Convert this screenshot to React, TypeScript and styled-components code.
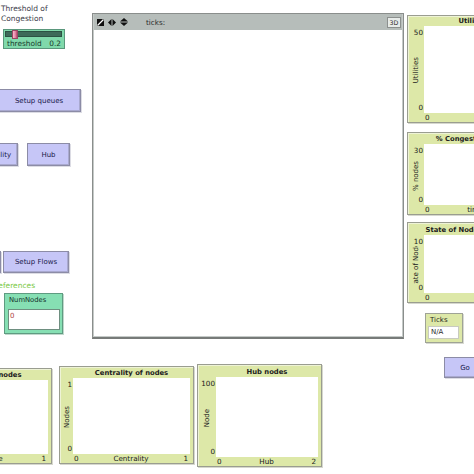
import React from "react";
import styled, { createGlobalStyle, css } from "styled-components";

const GlobalStyle = createGlobalStyle`
  html, body { margin: 0; padding: 0; background: #ffffff; }
  body {
    font-family: "DejaVu Sans", "Liberation Sans", sans-serif;
    overflow: hidden;
  }
`;

type Box = { $x: number; $y: number; $w: number; $h: number };

const placed = css<Box>`
  position: absolute;
  left: ${(p) => p.$x}px;
  top: ${(p) => p.$y}px;
  width: ${(p) => p.$w}px;
  height: ${(p) => p.$h}px;
  box-sizing: border-box;
`;

const Canvas = styled.div`
  position: relative;
  width: 474px;
  height: 474px;
  overflow: hidden;
  background: #ffffff;
`;

/* ---------- text notes ---------- */
const Note = styled.div<Box & { $color: string }>`
  ${placed};
  font-size: 7.5px;
  line-height: 9.5px;
  color: ${(p) => p.$color};
  white-space: nowrap;
`;

/* ---------- slider ---------- */
const Slider = styled.div<Box>`
  ${placed};
  display: flex;
  flex-direction: column;
  gap: 2px;
  padding: 1px 2px 0 1px;
  background: #80d9ab;
  border: 1px solid #5a977c;
`;

const SliderTrack = styled.div`
  position: relative;
  height: 6px;
  background: #3d6a59;
  border: 1px solid #2c5243;
  box-sizing: border-box;
`;

const SliderThumb = styled.div<{ $pos: number }>`
  position: absolute;
  top: -2px;
  left: ${(p) => p.$pos}%;
  width: 6px;
  height: 9px;
  box-sizing: border-box;
  background: linear-gradient(90deg, #f6b8cd 0%, #ea86a8 55%, #b04a6e 100%);
  border: 1px solid #9a4764;
`;

const SliderLabels = styled.div`
  display: flex;
  justify-content: space-between;
  padding: 0 1px 0 2px;
  font-size: 7.4px;
  line-height: 9px;
  color: #183a2c;
`;

/* ---------- buttons ---------- */
const Button = styled.div<Box>`
  ${placed};
  display: flex;
  align-items: center;
  justify-content: center;
  background: #c6c6f7;
  border: 1px solid #8c8ca6;
  box-shadow: inset -1px -1px 0 #a9a9cf, 1px 1px 0 #dcdce4;
  font-size: 7px;
  color: #18184a;
  white-space: nowrap;
`;

/* ---------- input ---------- */
const InputBox = styled.div<Box>`
  ${placed};
  display: flex;
  flex-direction: column;
  gap: 5px;
  padding: 2px 2px 3px 3px;
  background: #86dfb3;
  border: 1px solid #5f9b81;
  box-shadow: 1px 1px 0 #c0d8cc;
`;

const InputLabel = styled.div`
  font-size: 6.8px;
  line-height: 8px;
  color: #14302a;
  padding-left: 1px;
`;

const InputField = styled.div`
  flex: 1;
  background: #ffffff;
  border: 1px solid #6e8f80;
  font-size: 7px;
  line-height: 9px;
  padding: 2px 1px;
  color: #b04545;
`;

/* ---------- monitor ---------- */
const Monitor = styled.div<Box>`
  ${placed};
  display: flex;
  flex-direction: column;
  gap: 2px;
  padding: 2px 3px 3px 2px;
  background: #dde8a8;
  border: 1px solid #9fa396;
  box-shadow: 1px 1px 0 #d8dad2;
`;

const MonitorLabel = styled.div`
  font-size: 7px;
  line-height: 8px;
  color: #2a2a22;
  padding-left: 2px;
`;

const MonitorValue = styled.div`
  flex: 1;
  background: #ffffff;
  border: 1px solid #c8cac0;
  font-size: 7px;
  line-height: 11px;
  padding-left: 2px;
  color: #2a2a2a;
`;

/* ---------- world view ---------- */
const View = styled.div<Box>`
  ${placed};
  display: flex;
  flex-direction: column;
  padding: 0 1px 1px 1px;
  background: #c5cac8;
  border: 1px solid #8a8e8c;
  border-bottom: 2px solid #777b79;
`;

const ViewHeader = styled.div`
  height: 16px;
  flex: none;
  display: flex;
  align-items: center;
  gap: 4px;
  padding: 0 1px 0 3px;
  background: #b6bdba;
  font-size: 7.2px;
  color: #2b2b2b;
`;

const TicksLabel = styled.span`
  margin-left: 14px;
  flex: 1;
`;

const ThreeD = styled.div`
  width: 14px;
  height: 11px;
  box-sizing: border-box;
  display: flex;
  align-items: center;
  justify-content: center;
  background: #e7ebe9;
  border: 1px solid #8c908e;
  font-size: 6.3px;
  color: #2b2b2b;
`;

const ViewBody = styled.div`
  flex: 1;
  background: #ffffff;
`;

/* ---------- plot ---------- */
const PlotFrame = styled.div<Box & { $axis: number; $titleH: number }>`
  ${placed};
  display: grid;
  grid-template-columns: ${(p) => p.$axis}px 1fr;
  grid-template-rows: ${(p) => p.$titleH}px 1fr 9px;
  padding-right: 3px;
  background: #dde8a8;
  border: 1px solid #9a9d90;
  box-shadow: inset 1px 1px 0 #eef3d6, 1px 1px 0 #d6d8ce;
  color: #202020;
`;

const PlotTitle = styled.div`
  grid-column: 2;
  grid-row: 1;
  display: flex;
  justify-content: center;
  align-items: flex-end;
  padding-bottom: 1px;
  font-size: 6.8px;
  line-height: 8px;
  font-weight: bold;
  white-space: nowrap;
`;

const YAxis = styled.div`
  grid-column: 1;
  grid-row: 2;
  display: flex;
  flex-direction: column;
  min-height: 0;
  padding: 3px 1px 1px 0;
  font-size: 7.2px;
  line-height: 8px;
  text-align: right;
`;

const YLabelSlot = styled.div`
  flex: 1;
  min-height: 0;
  overflow: hidden;
  display: flex;
  align-items: center;
  justify-content: center;
  padding-left: 1px;
`;

const YLabel = styled.span`
  writing-mode: vertical-rl;
  transform: rotate(180deg);
  white-space: nowrap;
  font-size: 7px;
  line-height: 8px;
`;

const PlotArea = styled.div`
  grid-column: 2;
  grid-row: 2;
  background: #ffffff;
`;

const XAxis = styled.div`
  grid-column: 2;
  grid-row: 3;
  display: flex;
  justify-content: space-between;
  align-items: center;
  padding: 0 2px 0 1px;
  font-size: 7.2px;
  line-height: 9px;
  white-space: nowrap;
`;

type PlotProps = {
  x: number;
  y: number;
  w: number;
  h: number;
  axis: number;
  titleH?: number;
  title: string;
  yMax: string;
  yMin: string;
  yLabel: string;
  xMin: string;
  xMax: string;
  xLabel: string;
};

const Plot: React.FC<PlotProps> = ({ x, y, w, h, axis, titleH = 11, title, yMax, yMin, yLabel, xMin, xMax, xLabel }) => (
  <PlotFrame $x={x} $y={y} $w={w} $h={h} $axis={axis} $titleH={titleH}>
    <PlotTitle>{title}</PlotTitle>
    <YAxis>
      <div>{yMax}</div>
      <YLabelSlot>
        <YLabel>{yLabel}</YLabel>
      </YLabelSlot>
      <div>{yMin}</div>
    </YAxis>
    <PlotArea />
    <XAxis>
      <span>{xMin}</span>
      <span>{xLabel}</span>
      <span>{xMax}</span>
    </XAxis>
  </PlotFrame>
);

/* ---------- view icons ---------- */
const ShapeIcon = () => (
  <svg width="7" height="7" viewBox="0 0 7 7">
    <rect x="0" y="0" width="7" height="7" fill="#111" />
    <path d="M0.5 6.5 L6.5 0.5" stroke="#fff" strokeWidth="1.2" />
  </svg>
);

const HorizIcon = () => (
  <svg width="8" height="7" viewBox="0 0 8 7">
    <path d="M0 3.5 L3.5 0 L3.5 7 Z" fill="#111" />
    <path d="M8 3.5 L4.5 0 L4.5 7 Z" fill="#111" />
  </svg>
);

const VertIcon = () => (
  <svg width="8" height="8" viewBox="0 0 8 8">
    <path d="M4 0 L8 3.5 L0 3.5 Z" fill="#111" />
    <path d="M4 8 L8 4.5 L0 4.5 Z" fill="#111" />
  </svg>
);

export default function App() {
  return (
    <>
      <GlobalStyle />
      <Canvas>
        <Note $x={1} $y={4} $w={80} $h={20} $color="#3a3a48">
          Threshold of
          <br />
          Congestion
        </Note>

        <Slider $x={3} $y={29} $w={62} $h={20}>
          <SliderTrack>
            <SliderThumb $pos={10} />
          </SliderTrack>
          <SliderLabels>
            <span>threshold</span>
            <span>0.2</span>
          </SliderLabels>
        </Slider>

        <Button $x={-3} $y={89} $w={84} $h={23}>Setup queues</Button>
        <Button $x={-30} $y={143} $w={48} $h={23}>Centrality</Button>
        <Button $x={27} $y={143} $w={43} $h={23}>Hub</Button>
        <Button $x={-40} $y={251} $w={41} $h={22}>Go</Button>
        <Button $x={3} $y={251} $w={66} $h={22}>Setup Flows</Button>

        <Note $x={-9} $y={281} $w={60} $h={10} $color="#79c843">
          Preferences
        </Note>

        <InputBox $x={4} $y={293} $w={59} $h={41}>
          <InputLabel>NumNodes</InputLabel>
          <InputField>0</InputField>
        </InputBox>

        <View $x={92} $y={13} $w={312} $h={326}>
          <ViewHeader>
            <ShapeIcon />
            <HorizIcon />
            <VertIcon />
            <TicksLabel>ticks:</TicksLabel>
            <ThreeD>3D</ThreeD>
          </ViewHeader>
          <ViewBody />
        </View>

        <Plot x={407} y={15} w={120} h={108} axis={16} titleH={10} title="Utilities"
          yMax="50" yMin="0" yLabel="Utilities" xMin="0" xMax="" xLabel="" />
        <Plot x={407} y={132} w={120} h={83} axis={16} titleH={11} title="% Congested nodes"
          yMax="30" yMin="0" yLabel="% nodes" xMin="0" xMax="" xLabel="time" />
        <Plot x={407} y={222} w={120} h={81} axis={16} titleH={12} title="State of Nodes over time"
          yMax="10" yMin="0" yLabel="State of Nodes" xMin="0" xMax="" xLabel="" />

        <Monitor $x={425} $y={313} $w={38} $h={30}>
          <MonitorLabel>Ticks</MonitorLabel>
          <MonitorValue>N/A</MonitorValue>
        </Monitor>

        <Button $x={444} $y={357} $w={42} $h={21}>Go</Button>

        <Plot x={-85} y={368} w={137} h={96} axis={16} titleH={11} title="Degree of nodes"
          yMax="1" yMin="0" yLabel="Nodes" xMin="0" xMax="1" xLabel="Degree" />
        <Plot x={59} y={366} w={135} h={98} axis={13} titleH={11} title="Centrality of nodes"
          yMax="1" yMin="0" yLabel="Nodes" xMin="0" xMax="1" xLabel="Centrality" />
        <Plot x={197} y={364} w={125} h={103} axis={18} titleH={12} title="Hub nodes"
          yMax="100" yMin="0" yLabel="Node" xMin="0" xMax="2" xLabel="Hub" />
      </Canvas>
    </>
  );
}
